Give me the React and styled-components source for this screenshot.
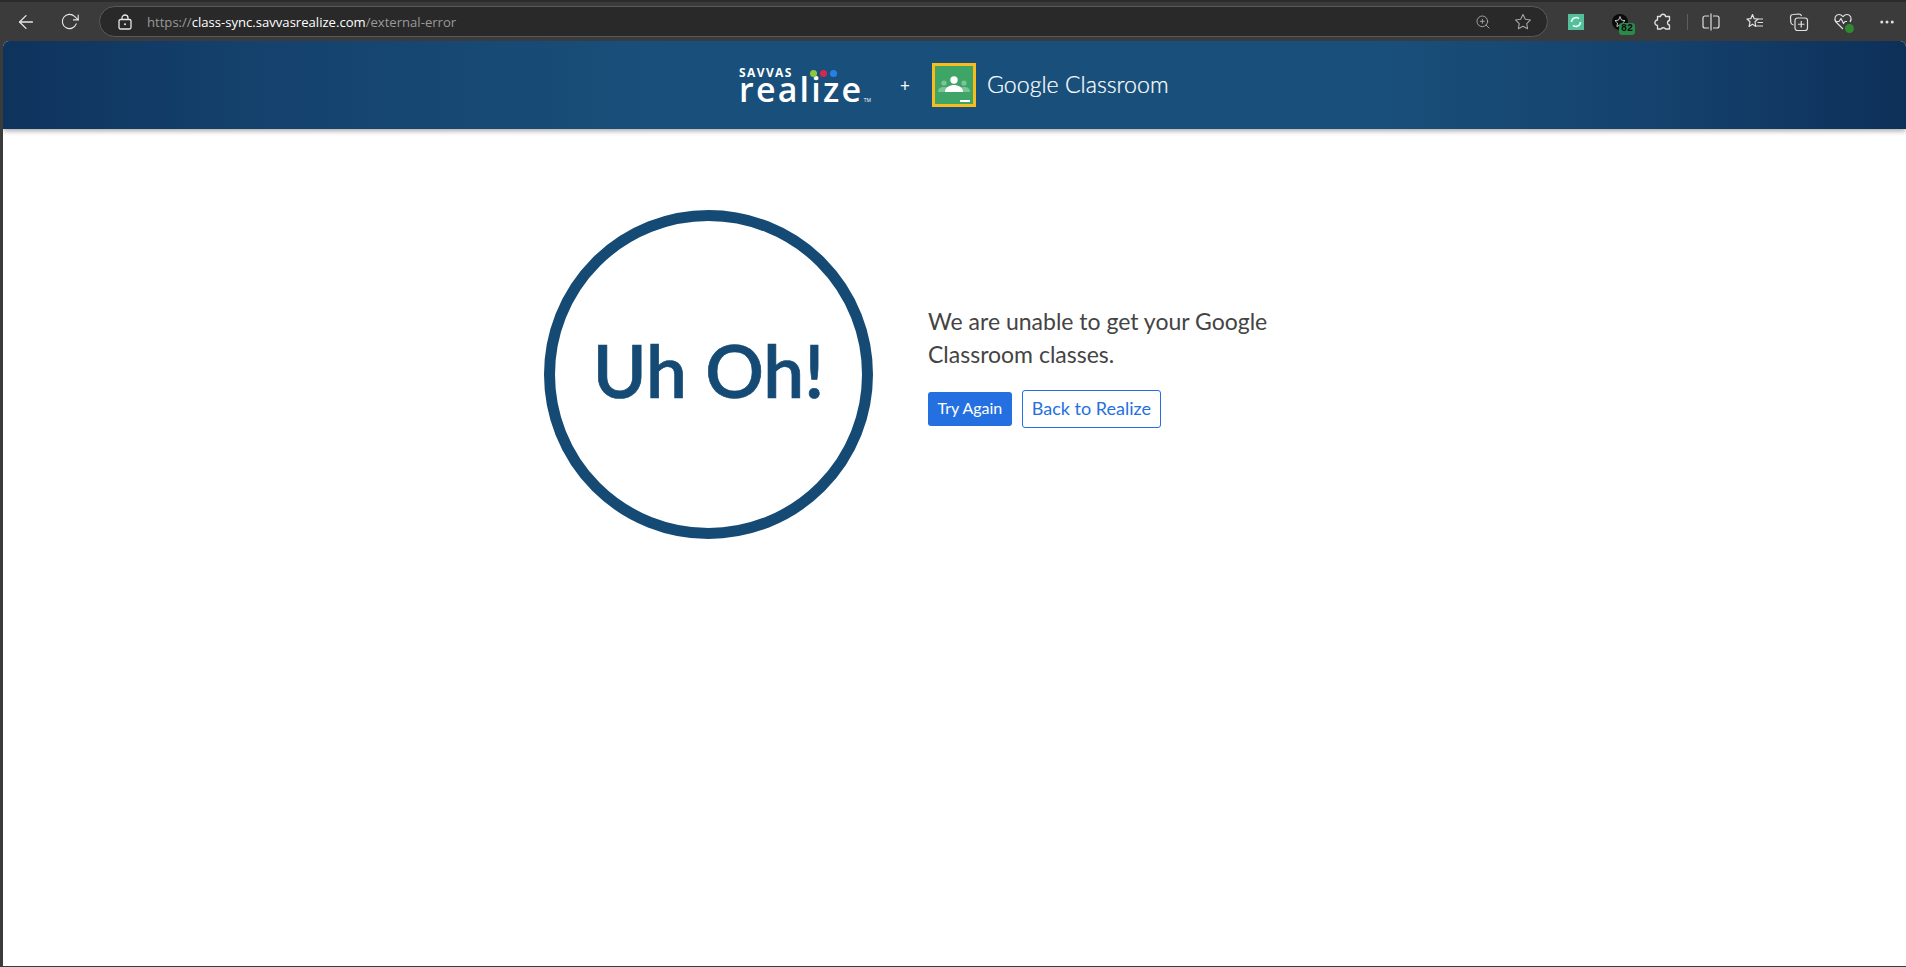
import React from 'react'
import styled, { createGlobalStyle } from 'styled-components'
import { FiArrowLeft, FiRotateCw, FiZoomIn, FiStar, FiMoreHorizontal } from 'react-icons/fi'

const GlobalStyle = createGlobalStyle`
	html, body {
		margin: 0;
		padding: 0;
		background: #fff;
	}
	* {
		box-sizing: border-box;
	}
`

const App = () => {
	return (
		<>
			<GlobalStyle />
			<Page>
				<BrowserBar>
					<NavIcon $left={15}><FiArrowLeft size={22} strokeWidth={1.4} /></NavIcon>
					<NavIcon $left={23}><FiRotateCw size={19} strokeWidth={1.4} /></NavIcon>
					<AddressBar>
						<svg width="14" height="16" viewBox="0 0 14 16" fill="none" stroke="#e8e8e8" strokeWidth="1.300">
							<rect x="1" y="5.500" width="12" height="9.500" rx="1.500" />
							<path d="M4 5.500V4a3 3 0 0 1 6 0v1.500" />
							<circle cx="7" cy="10.200" r="1" fill="#e8e8e8" stroke="none" />
						</svg>
						<Url>
							https://<UrlHost>class-sync.savvasrealize.com</UrlHost>/external-error
						</Url>
						<AddressIcons>
							<FiZoomIn size={16} strokeWidth={1.4} />
							<FiStar size={18} strokeWidth={1.4} />
						</AddressIcons>
					</AddressBar>
					<Tools>
						<ExtensionSquare>
							<svg width="12" height="12" viewBox="0 0 12 12" fill="none" stroke="#e8fff6" strokeWidth="1.600">
								<path d="M1.500 6a4.500 4.500 0 0 1 7.500-3.300" />
								<path d="M10.500 6A4.500 4.500 0 0 1 3 9.300" />
							</svg>
						</ExtensionSquare>
						<ExtensionBadge>
							<FiStar size={12} color="#eee" strokeWidth={1.6} />
							<Count>82</Count>
						</ExtensionBadge>
						<PuzzleIcon>
							<svg width="20" height="20" viewBox="0 0 20 20" fill="none" stroke="currentColor" strokeWidth="1.300" strokeLinejoin="round">
								<path d="M7.500 4.500c0-3 5-3 5 0h4v4c-2.600 0-2.600 4.500 0 4.500v4h-4c-.5-1.700-4-1.700-4.500 0H4.500v-3.500c-3.500 0-3.500-5.500 0-5.500v-3.500z" />
							</svg>
						</PuzzleIcon>
						<Divider />
						<ToolIcon>
							<svg width="20" height="20" viewBox="0 0 20 20" fill="none" stroke="currentColor" strokeWidth="1.200">
								<path d="M8 4H4a2 2 0 0 0-2 2v8a2 2 0 0 0 2 2h4M12 4h4a2 2 0 0 1 2 2v8a2 2 0 0 1-2 2h-4M10 1.500v17" />
							</svg>
						</ToolIcon>
						<ToolIcon>
							<svg width="20" height="20" viewBox="0 0 20 20" fill="none" stroke="currentColor" strokeWidth="1.200" strokeLinejoin="round">
								<path d="M7.500 2.500l1.700 4.200 3.800.3-3 2.800.9 4.700-3.400-2.300-3.400 2.300.9-4.700-3-2.800 3.800-.3z" />
								<path d="M13 7h5M12.500 10.500h5.500M11.500 14h6.500" />
							</svg>
						</ToolIcon>
						<ToolIcon>
							<svg width="20" height="20" viewBox="0 0 20 20" fill="none" stroke="currentColor" strokeWidth="1.200" strokeLinejoin="round">
								<path d="M4.500 13c-1.500-.5-2.500-1-2.700-2.500L1.500 5c0-1.500 1-2.500 2.500-2.500L10 2c1.300 0 2.200.7 2.500 2" />
								<rect x="6" y="6" width="12.500" height="12.500" rx="2.500" />
								<path d="M12.250 9v6.500M9 12.250h6.500" />
							</svg>
						</ToolIcon>
						<HealthIcon>
							<svg width="20" height="20" viewBox="0 0 20 20" fill="none" stroke="currentColor" strokeWidth="1.200" strokeLinejoin="round">
								<path d="M10 17L3 10C.5 7 2.500 2.500 6 2.500c1.800 0 3 1 4 2.200 1-1.200 2.200-2.200 4-2.200 3.500 0 5.500 4.500 3 7.500" />
								<path d="M2 9.500h4l2-3 2.500 5 1.500-2h2" />
							</svg>
							<HealthDot />
						</HealthIcon>
						<ToolIcon><FiMoreHorizontal size={18} strokeWidth={2} /></ToolIcon>
					</Tools>
				</BrowserBar>
				<Frame>
					<Header>
						<RealizeLogo>
							<SavvasText>SAVVAS</SavvasText>
							<RealizeText>realize</RealizeText>
							<Trademark>TM</Trademark>
							<Dots>
								<Dot $color="#8dc63f" />
								<Dot $color="#d7264f" />
								<Dot $color="#2680eb" />
							</Dots>
						</RealizeLogo>
						<Plus>+</Plus>
						<ClassroomIcon>
							<svg width="38" height="38" viewBox="0 0 38 38">
								<rect width="38" height="38" fill="#3fa566" />
								<circle cx="9" cy="17" r="2.600" fill="#7cc498" />
								<circle cx="29" cy="17" r="2.600" fill="#7cc498" />
								<path d="M3 26c0-4 3-5 6-5s6 1 6 5zM23 26c0-4 3-5 6-5s6 1 6 5z" fill="#7cc498" />
								<circle cx="19" cy="14" r="3.700" fill="#fff" />
								<path d="M10 26c0-5 5-7 9-7s9 2 9 7z" fill="#fff" />
								<rect x="25" y="34" width="10" height="2" fill="#fff" />
							</svg>
						</ClassroomIcon>
						<ClassroomName>Google Classroom</ClassroomName>
					</Header>
					<Main>
						<Circle>Uh Oh!</Circle>
						<Message>
							<MessageText>We are unable to get your Google Classroom classes.</MessageText>
							<Actions>
								<PrimaryButton>Try Again</PrimaryButton>
								<OutlineButton>Back to Realize</OutlineButton>
							</Actions>
						</Message>
					</Main>
				</Frame>
			</Page>
		</>
	)
}

export default App

const Page = styled.div`
	width: 1906px;
	height: 967px;
	display: flex;
	flex-direction: column;
	overflow: hidden;
	background: #3b3b3b;
	font-family: Lato, "Liberation Sans", sans-serif;
`
const BrowserBar = styled.div`
	height: 41px;
	flex-shrink: 0;
	display: flex;
	align-items: center;
	background: #3b3b3b;
	border-top: 2px solid #2b2b2b;
	color: #e8e8e8;
`
const NavIcon = styled.div`
	display: flex;
	margin-left: ${props => props.$left}px;
`
const AddressBar = styled.div`
	width: 1449px;
	height: 31px;
	margin-left: 20px;
	padding: 0 15px 0 18px;
	display: flex;
	align-items: center;
	background: #292929;
	border: 1px solid #5a5a5a;
	border-radius: 16px;
`
const Url = styled.span`
	margin-left: 15px;
	font-family: "Open Sans", sans-serif;
	font-size: 13.100px;
	color: #9a9a9a;
`
const UrlHost = styled.span`
	color: #fff;
`
const AddressIcons = styled.div`
	margin-left: auto;
	display: flex;
	align-items: center;
	gap: 23px;
	color: #a8a8a8;
`
const Tools = styled.div`
	flex: 1;
	display: flex;
	align-items: center;
	padding-left: 20px;
	color: #e0e0e0;
`
const ExtensionSquare = styled.div`
	width: 16px;
	height: 16px;
	display: flex;
	align-items: center;
	justify-content: center;
	background: #55bf9c;
`
const ExtensionBadge = styled.div`
	position: relative;
	width: 16px;
	height: 16px;
	margin-left: 28px;
	display: flex;
	align-items: center;
	justify-content: center;
	border-radius: 50%;
	background: #0b0b0b;
`
const Count = styled.span`
	position: absolute;
	left: 7px;
	top: 9px;
	width: 16px;
	height: 12px;
	border-radius: 3px;
	background: #2a8a4a;
	color: #0c0c0c;
	font-family: "Liberation Mono", monospace;
	font-size: 10px;
	font-weight: 700;
	line-height: 12px;
	text-align: center;
`
const ToolIcon = styled.div`
	width: 20px;
	display: flex;
	justify-content: center;
	margin-left: 24px;
`
const PuzzleIcon = styled(ToolIcon)`
	margin-left: 25px;
`
const Divider = styled.div`
	width: 1px;
	height: 16px;
	margin-left: 14px;
	margin-right: -11px;
	background: #5e5e5e;
`
const HealthIcon = styled(ToolIcon)`
	position: relative;
`
const HealthDot = styled.span`
	position: absolute;
	right: -1px;
	bottom: -1px;
	width: 9px;
	height: 9px;
	border-radius: 50%;
	background: #2f8a2f;
`
const Frame = styled.div`
	flex: 1;
	margin: 0 0 1px 3px;
	display: flex;
	flex-direction: column;
	background: #fff;
	border-radius: 6px 6px 0 0;
	overflow: hidden;
`
const Header = styled.header`
	height: 88px;
	flex-shrink: 0;
	display: flex;
	align-items: center;
	padding-left: 736px;
	background: linear-gradient(90deg, #0e335d 0%, #14406c 12%, #19507b 35%, #19507b 72%, #14406c 88%, #0d3059 100%);
	box-shadow: 0 2px 5px rgba(0, 0, 0, 0.35);
	position: relative;
`
const RealizeLogo = styled.div`
	position: relative;
	width: 132px;
	height: 36px;
	margin-top: -1px;
	color: #fff;
	font-family: "Open Sans", sans-serif;
`
const SavvasText = styled.div`
	font-size: 12px;
	font-weight: 700;
	line-height: 11px;
	letter-spacing: 1.400px;
`
const RealizeText = styled.div`
	font-size: 34px;
	font-weight: 600;
	line-height: 23px;
	letter-spacing: 2.200px;
`
const Trademark = styled.span`
	position: absolute;
	right: 0;
	bottom: 0;
	font-size: 5px;
`
const Dots = styled.div`
	position: absolute;
	left: 71px;
	top: 3px;
	display: flex;
	gap: 3px;
`
const Dot = styled.span`
	width: 7px;
	height: 7px;
	border-radius: 50%;
	background: ${props => props.$color};
`
const Plus = styled.span`
	margin-left: 29px;
	width: 32px;
	color: #fff;
	font-size: 17px;
`
const ClassroomIcon = styled.div`
	display: flex;
	border: 3px solid #f8bc1c;
`
const ClassroomName = styled.span`
	margin: -2px 0 0 11px;
	color: #fff;
	font-size: 23.150px;
	font-weight: 300;
	-webkit-text-stroke: 0.200px #fff;
`
const Main = styled.main`
	display: flex;
	align-items: center;
	padding: 81px 0 0 541px;
`
const Circle = styled.div`
	width: 329px;
	height: 329px;
	flex-shrink: 0;
	display: flex;
	align-items: center;
	justify-content: center;
	padding-bottom: 9px;
	border: 11px solid #154a74;
	border-radius: 50%;
	color: #154a74;
	font-size: 73px;
	font-weight: 600;
	-webkit-text-stroke: 0.700px #154a74;
`
const Message = styled.div`
	width: 360px;
	margin: 0 0 17px 55px;
`
const MessageText = styled.p`
	margin: 0;
	color: #444;
	font-size: 23px;
	line-height: 33px;
`
const Actions = styled.div`
	display: flex;
	align-items: center;
	gap: 10px;
	margin-top: 19px;
`
const PrimaryButton = styled.button`
	height: 34px;
	padding: 0 9.500px 2px;
	border: none;
	border-radius: 3px;
	background: #2470e0;
	color: #fff;
	font-family: inherit;
	font-size: 16px;
`
const OutlineButton = styled.button`
	height: 38px;
	padding: 0 9px 2px;
	border: 1px solid #2470e0;
	border-radius: 3px;
	background: #fff;
	color: #2470e0;
	font-family: inherit;
	font-size: 18px;
`
